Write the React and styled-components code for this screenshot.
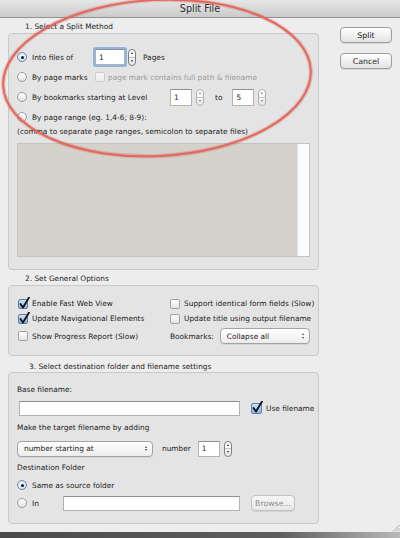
import React from "react";
import styled, { createGlobalStyle } from "styled-components";

const GlobalStyle = createGlobalStyle`
  html, body {
    margin: 0;
    padding: 0;
    background: #4f4f4f;
  }
  body {
    font-family: "DejaVu Sans", "Liberation Sans", sans-serif;
    font-size: 7.4px;
    color: #1c1c1c;
  }
  * {
    box-sizing: border-box;
  }
`;

const Page = styled.div`
  position: relative;
  width: 400px;
  height: 538px;
  overflow: hidden;
  background: linear-gradient(to right, #4a4a4a, #5e5e5e 70%, #b9b9b9);
`;

const Window = styled.div`
  position: relative;
  height: 532px;
  display: flex;
  flex-direction: column;
  background: #ededed;
`;

const TitleBar = styled.div`
  height: 18px;
  display: flex;
  align-items: center;
  justify-content: center;
  font-size: 9.6px;
  color: #2e2e2e;
  background: linear-gradient(#e6e6e6, #cbcbcb);
  border-bottom: 1px solid #939393;
`;

const Body = styled.div`
  flex: 1;
  display: flex;
  padding: 0 0 8px 8px;
`;

const Main = styled.div`
  width: 311px;
  display: flex;
  flex-direction: column;
`;

const Legend = styled.div`
  height: ${(p) => p.$h || 15}px;
  padding: ${(p) => p.$top || 3}px 0 0 ${(p) => p.$indent || 17}px;
  line-height: 12px;
  white-space: nowrap;
`;

const Group = styled.div`
  border: 1px solid #c9c9c9;
  border-radius: 4px;
  background: #e4e4e4;
  padding: ${(p) => p.$pad};
  display: flex;
  flex-direction: column;
`;

const Row = styled.div`
  height: ${(p) => p.$h}px;
  margin-top: ${(p) => p.$mt || 0}px;
  display: flex;
  align-items: center;
`;

const Choice = styled.label`
  width: ${(p) => p.$w}px;
  display: flex;
  align-items: center;
  gap: 5px;
  flex: none;
  white-space: nowrap;
`;

const Radio = styled.span`
  position: relative;
  width: 10px;
  height: 10px;
  flex: none;
  border-radius: 50%;
  border: 1px solid ${(p) => (p.$on ? "#6b87a8" : "#9b9b9b")};
  background: ${(p) =>
    p.$on
      ? "radial-gradient(circle at 50% 40%, #ffffff, #b9d2ee)"
      : "linear-gradient(#ffffff, #e2e2e2)"};
  &::after {
    content: "";
    display: ${(p) => (p.$on ? "block" : "none")};
    position: absolute;
    left: 2.5px;
    top: 2.5px;
    width: 3px;
    height: 3px;
    border-radius: 50%;
    background: #111;
  }
`;

const Box = styled.span`
  position: relative;
  width: ${(p) => p.$size || 10}px;
  height: ${(p) => p.$size || 10}px;
  flex: none;
  margin-left: ${(p) => p.$ml || 0}px;
  border-radius: 2px;
  border: 1px solid
    ${(p) => (p.$on ? "#5b7fa8" : p.$disabled ? "#cdcdcd" : "#a2a2a2")};
  background: ${(p) =>
    p.$on
      ? "linear-gradient(#cfe1f5, #89b2e0)"
      : p.$disabled
      ? "linear-gradient(#f8f8f8, #ececec)"
      : "linear-gradient(#ffffff, #e4e4e4)"};
  svg {
    position: absolute;
    left: 0px;
    top: -3px;
  }
`;

const Check = ({ on, disabled, size, ml }) => (
  <Box $on={on} $disabled={disabled} $size={size} $ml={ml}>
    {on && (
      <svg width="11" height="12" viewBox="0 0 11 12">
        <path
          d="M1.5 7 L4 10.5 L10 0.5"
          fill="none"
          stroke="#111"
          strokeWidth="1.8"
          strokeLinecap="round"
          strokeLinejoin="round"
        />
      </svg>
    )}
  </Box>
);

const Text = styled.span`
  margin-left: ${(p) => p.$ml || 0}px;
  color: ${(p) => (p.$muted ? "#9b9b9b" : "inherit")};
  white-space: nowrap;
`;

const Field = styled.span`
  width: ${(p) => p.$w}px;
  height: ${(p) => p.$h || 16}px;
  margin-left: ${(p) => p.$ml || 0}px;
  flex: none;
  display: flex;
  align-items: center;
  padding-left: 3px;
  background: #fff;
  border: 1px solid #b3b3b3;
  border-top-color: #8f8f8f;
  box-shadow: ${(p) => (p.$focus ? "0 0 0 2px #8db4e2" : "none")};
  border-radius: ${(p) => (p.$focus ? "1px" : "0")};
`;

const StepBox = styled.span`
  width: ${(p) => p.$w || 8}px;
  height: ${(p) => p.$h || 16}px;
  margin-left: ${(p) => p.$ml || 0}px;
  flex: none;
  display: flex;
  flex-direction: column;
  border: 1px solid ${(p) => (p.$dark ? "#7d7d7d" : "#b0b0b0")};
  border-radius: 4px;
  background: linear-gradient(#ffffff, #e9e9e9);
  overflow: hidden;
`;

const StepHalf = styled.span`
  flex: 1;
  display: flex;
  align-items: center;
  justify-content: center;
  border-top: ${(p) => (p.$lower ? "1px solid #c4c4c4" : "none")};
`;

const Arrow = styled.span`
  width: 0;
  height: 0;
  border-left: 1.5px solid transparent;
  border-right: 1.5px solid transparent;
  ${(p) =>
    p.$down
      ? `border-top: 2.5px solid ${p.$c || "#444"};`
      : `border-bottom: 2.5px solid ${p.$c || "#444"};`}
`;

const Stepper = ({ w, h, ml, dark }) => (
  <StepBox $w={w} $h={h} $ml={ml} $dark={dark}>
    <StepHalf>
      <Arrow $c={dark ? "#222" : "#777"} />
    </StepHalf>
    <StepHalf $lower>
      <Arrow $down $c={dark ? "#222" : "#777"} />
    </StepHalf>
  </StepBox>
);

const PopBox = styled.span`
  width: ${(p) => p.$w}px;
  height: 16px;
  margin-left: ${(p) => p.$ml || 0}px;
  flex: none;
  display: flex;
  align-items: center;
  justify-content: space-between;
  padding: 0 5px 0 6px;
  border: 1px solid #a3a3a3;
  border-radius: 4px;
  background: linear-gradient(#ffffff, #ececec);
  box-shadow: 0 1px 0 rgba(0, 0, 0, 0.06);
  white-space: nowrap;
`;

const Arrows = styled.span`
  display: flex;
  flex-direction: column;
  gap: 1.5px;
`;

const PopUp = ({ w, ml, children }) => (
  <PopBox $w={w} $ml={ml}>
    <span>{children}</span>
    <Arrows>
      <Arrow />
      <Arrow $down />
    </Arrows>
  </PopBox>
);

const Hint = styled.div`
  height: 10px;
  line-height: 10px;
  margin-top: ${(p) => p.$mt || 0}px;
  white-space: nowrap;
`;

const Caption = styled.div`
  height: 12px;
  line-height: 12px;
  margin-top: ${(p) => p.$mt || 0}px;
  white-space: nowrap;
`;

const ListArea = styled.div`
  margin-top: 6px;
  width: 293px;
  height: 114px;
  display: flex;
  border: 1px solid #c3c3c3;
  background: #d5d1cb;
`;

const ScrollTrack = styled.div`
  margin-left: auto;
  width: 12px;
  background: #fbfbfb;
  border-left: 1px solid #e2e2e2;
`;

const OptionGrid = styled.div`
  display: grid;
  grid-template-columns: 152px 1fr;
  grid-auto-rows: auto;
  align-items: center;
`;

const Option = styled.label`
  display: flex;
  align-items: center;
  gap: 4px;
  height: ${(p) => p.$h || 15}px;
  margin-top: ${(p) => p.$mt || 0}px;
  white-space: nowrap;
`;

const Side = styled.div`
  margin-left: 21px;
  padding-top: 9px;
  display: flex;
  flex-direction: column;
  gap: 10px;
`;

const MacButton = styled.button`
  width: ${(p) => p.$w || 52}px;
  height: 16px;
  margin-left: ${(p) => p.$ml || 0}px;
  flex: none;
  padding: 0;
  font-family: inherit;
  font-size: 7.8px;
  color: ${(p) => (p.$disabled ? "#8c8c8c" : "#1c1c1c")};
  border: 1px solid ${(p) => (p.$disabled ? "#c2c2c2" : "#9d9d9d")};
  border-radius: 4px;
  background: ${(p) =>
    p.$disabled
      ? "linear-gradient(#f6f6f6, #e8e8e8)"
      : "linear-gradient(#ffffff, #f0f0f0 50%, #e3e3e3)"};
  box-shadow: 0 1px 0 rgba(0, 0, 0, 0.08);
`;

const Grip = styled.svg`
  position: absolute;
  right: 0;
  bottom: 0;
`;

const Annotation = styled.svg`
  position: absolute;
  left: 0;
  top: 0;
  pointer-events: none;
`;

export default function App() {
  return (
    <Page>
      <GlobalStyle />
      <Window>
        <TitleBar>Split File</TitleBar>
        <Body>
          <Main>
            <Legend>1. Select a Split Method</Legend>
            <Group $pad="13px 8px 12px 8px">
              <Row $h={20}>
                <Choice $w={78}>
                  <Radio $on />
                  Into files of
                </Choice>
                <Field $w={30} $focus>1</Field>
                <Stepper ml={3} h={17} dark />
                <Text $ml={7}>Pages</Text>
              </Row>
              <Row $h={20}>
                <Choice $w={78}>
                  <Radio />
                  By page marks
                </Choice>
                <Check disabled />
                <Text $ml={3} $muted>
                  page mark contains full path &amp; filename
                </Text>
              </Row>
              <Row $h={20}>
                <Choice $w={153}>
                  <Radio />
                  By bookmarks starting at Level
                </Choice>
                <Field $w={22} $h={17}>1</Field>
                <Stepper ml={4} h={17} />
                <Text $ml={11}>to</Text>
                <Field $w={22} $h={17} $ml={10}>5</Field>
                <Stepper ml={4} h={17} />
              </Row>
              <Row $h={20}>
                <Choice $w={200}>
                  <Radio />
                  By page range (eg. 1,4-6; 8-9):
                </Choice>
              </Row>
              <Hint>(comma to separate page ranges, semicolon to separate files)</Hint>
              <ListArea>
                <ScrollTrack />
              </ListArea>
            </Group>

            <Legend>2. Set General Options</Legend>
            <Group $pad="10px 8px 10px 9px">
              <OptionGrid>
                <Option>
                  <Check on />
                  Enable Fast Web View
                </Option>
                <Option>
                  <Check />
                  Support identical form fields (Slow)
                </Option>
                <Option>
                  <Check on />
                  Update Navigational Elements
                </Option>
                <Option>
                  <Check />
                  Update title using output filename
                </Option>
                <Option $h={18} $mt={1}>
                  <Check />
                  Show Progress Report (Slow)
                </Option>
                <Option $h={18} $mt={1}>
                  Bookmarks:
                  <PopUp w={90} ml={2}>
                    Collapse all
                  </PopUp>
                </Option>
              </OptionGrid>
            </Group>

            <Legend $h={16} $top={5} $indent={21}>
              3. Select destination folder and filename settings
            </Legend>
            <Group $pad="11px 8px 12px 8px">
              <Caption>Base filename:</Caption>
              <Row $h={15} $mt={5}>
                <Field $w={221} $h={15} $ml={2} />
                <Check on size={11} ml={11} />
                <Text $ml={4}>Use filename</Text>
              </Row>
              <Caption $mt={6}>Make the target filename by adding</Caption>
              <Row $h={17} $mt={6}>
                <PopUp w={136}>number starting at</PopUp>
                <Text $ml={9}>number</Text>
                <Field $w={22} $ml={7}>1</Field>
                <Stepper ml={4} h={16} dark />
              </Row>
              <Caption $mt={5}>Destination Folder</Caption>
              <Row $h={14} $mt={4}>
                <Choice $w={150}>
                  <Radio $on />
                  Same as source folder
                </Choice>
              </Row>
              <Row $h={16} $mt={3}>
                <Choice $w={46}>
                  <Radio />
                  In
                </Choice>
                <Field $w={177} $h={15} />
                <MacButton $w={44} $ml={11} $disabled>
                  Browse...
                </MacButton>
              </Row>
            </Group>
          </Main>
          <Side>
            <MacButton>Split</MacButton>
            <MacButton>Cancel</MacButton>
          </Side>
        </Body>
        <Grip width="8" height="8" viewBox="0 0 8 8">
          <path d="M7.5 1 L1 7.5 M7.5 4 L4 7.5 M7.5 6.5 L6.5 7.5" stroke="#9a9a9a" strokeWidth="0.8" />
        </Grip>
      </Window>
      <Annotation width="400" height="538" viewBox="0 0 400 538">
        <ellipse
          cx="157"
          cy="78"
          rx="154"
          ry="78"
          transform="rotate(-3 157 78)"
          fill="none"
          stroke="rgba(200,80,70,0.25)"
          strokeWidth="4.5"
        />
        <ellipse
          cx="157"
          cy="78"
          rx="154"
          ry="78"
          transform="rotate(-3 157 78)"
          fill="none"
          stroke="#e4675c"
          strokeWidth="2"
        />
      </Annotation>
    </Page>
  );
}
